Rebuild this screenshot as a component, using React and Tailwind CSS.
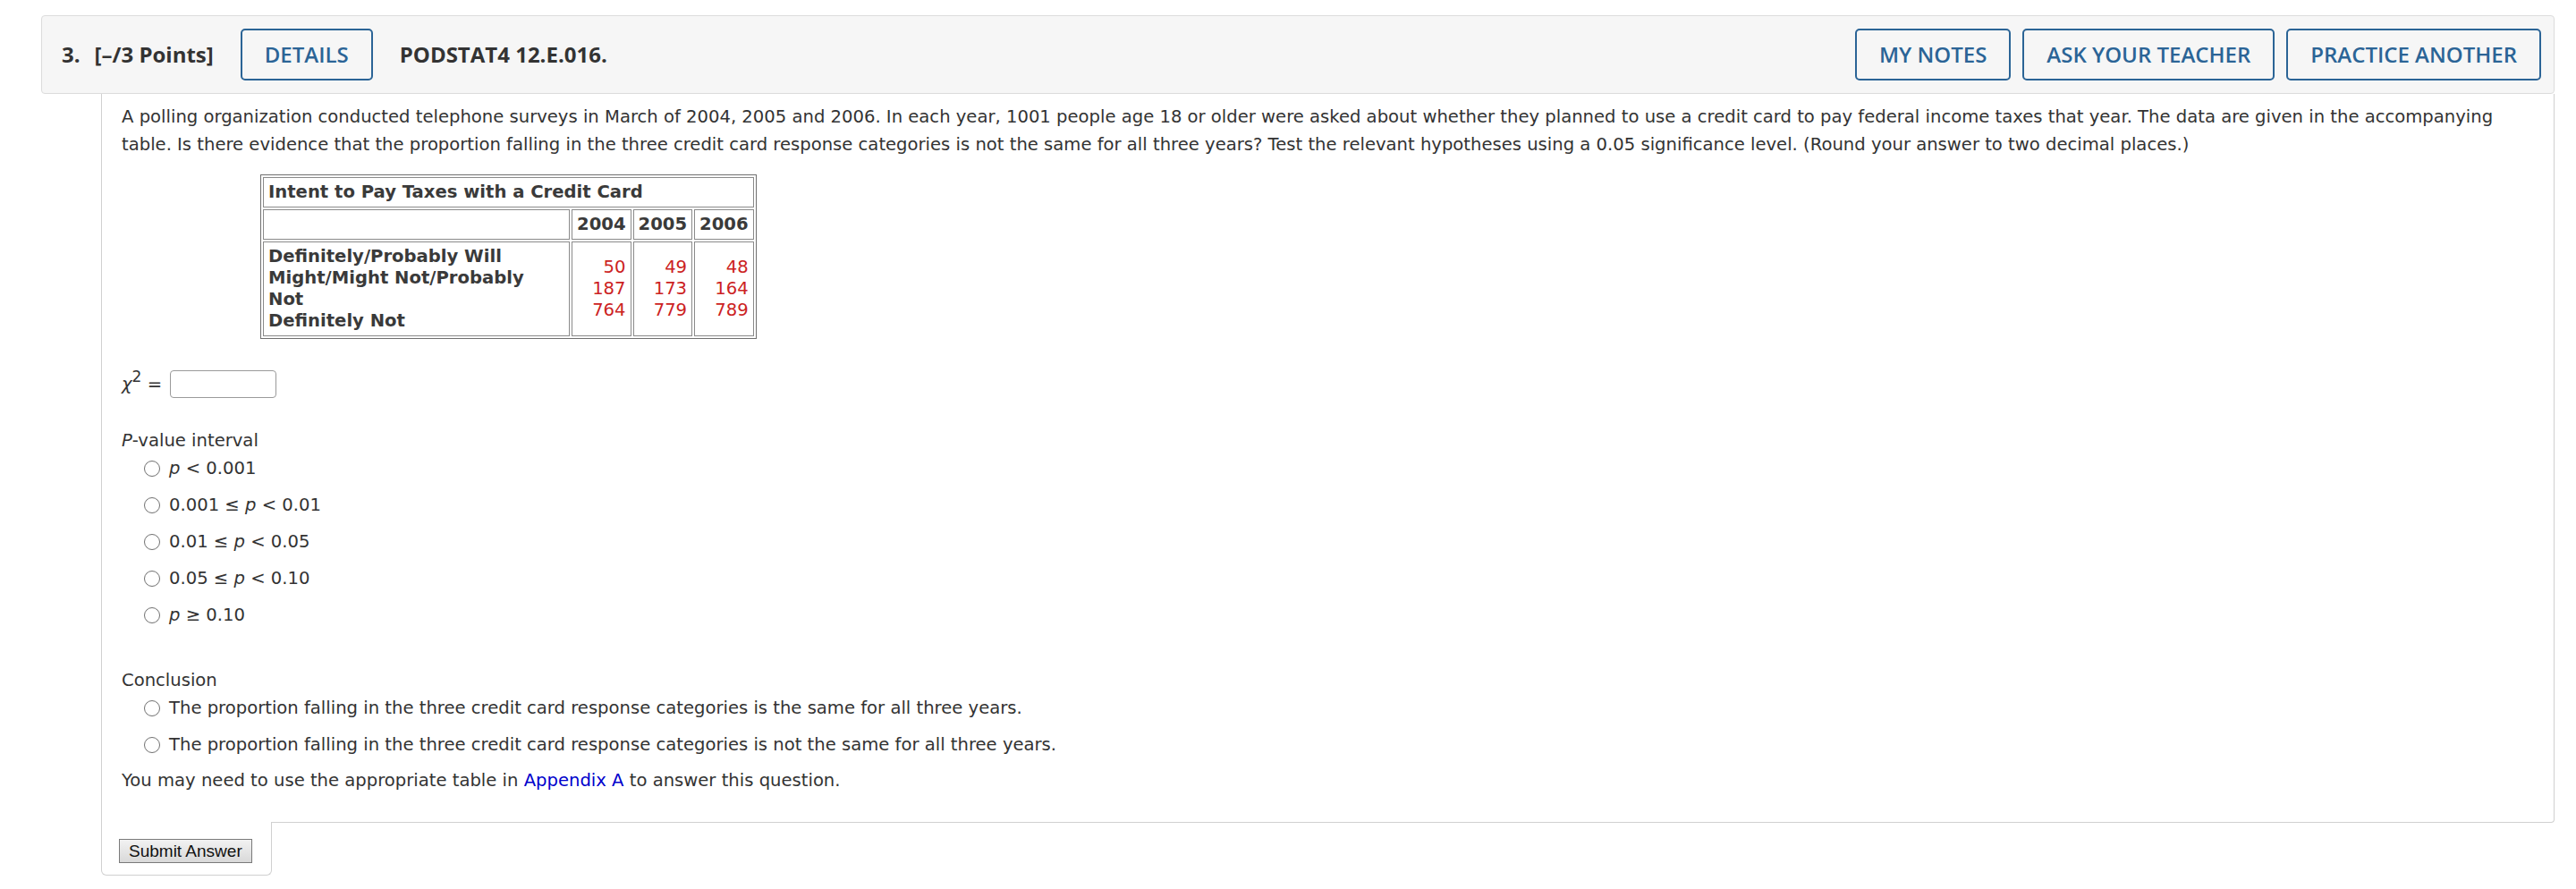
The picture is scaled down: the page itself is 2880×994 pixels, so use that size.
import React from "react";

const Radio = () => (
  <span className="inline-block w-[18px] h-[18px] rounded-full border-[1.5px] border-[#707070] bg-white shrink-0" />
);

const Option = ({ children, first }) => (
  <div className={`flex items-center pl-[25px] h-[31px] gap-[10px] ${first ? "" : "mt-[10px]"}`}>
    <Radio />
    <span>{children}</span>
  </div>
);

const HeadBtn = ({ children }) => (
  <button className="h-[58px] px-[25px] rounded-[5px] border-2 border-[#2b6496] text-[#2b6496] text-[24px] font-semibold leading-none whitespace-nowrap">
    {children}
  </button>
);

const cell = "border border-[#8a8a8a] px-[5px] py-[4px] leading-[24px]";

export default function App() {
  return (
    <div className="bg-white min-h-[994px] pl-[46px] pr-[24px] pt-[17px] text-[#333]">
      {/* header */}
      <div className="h-[88px] flex items-center justify-between bg-[#f6f6f6] border border-[#dcdcdc] rounded-[4px] pl-[22px] pr-[14px] font-['Open_Sans',sans-serif] text-[24px] font-bold text-[#333]">
        <div className="flex items-center">
          <span className="mr-[16px]">3.</span>
          <span className="mr-[30px]">[–/3 Points]</span>
          <HeadBtn>DETAILS</HeadBtn>
          <span className="ml-[30px]">PODSTAT4 12.E.016.</span>
        </div>
        <div className="flex items-center gap-[13px]">
          <HeadBtn>MY NOTES</HeadBtn>
          <HeadBtn>ASK YOUR TEACHER</HeadBtn>
          <HeadBtn>PRACTICE ANOTHER</HeadBtn>
        </div>
      </div>

      {/* body */}
      <div className="ml-[67px] border-l border-r border-b border-[#d0d0d0] rounded-br-[4px] pl-[22px] pr-[22px] pt-[10px] pb-[31px] font-['DejaVu_Sans',sans-serif] text-[19.6px] leading-[31px] text-[#333]">
        <p>
          A polling organization conducted telephone surveys in March of 2004, 2005 and 2006. In each year, 1001 people age 18 or older were asked about whether they planned to use a credit card to pay federal income taxes that year. The data are given in the accompanying
          <br />
          table. Is there evidence that the proportion falling in the three credit card response categories is not the same for all three years? Test the relevant hypotheses using a 0.05 significance level. (Round your answer to two decimal places.)
        </p>

        <div className="mt-[18px] ml-[155px]">
          <table className="border-separate border-spacing-[2px] border border-[#707070] text-[19.6px] text-[#3a3a3a]">
            <tbody>
              <tr>
                <td colSpan={4} className={`${cell} font-bold text-left`}>
                  Intent to Pay Taxes with a Credit Card
                </td>
              </tr>
              <tr>
                <td className={`${cell} w-[343px]`}></td>
                <td className={`${cell} w-[66px] font-bold text-right`}>2004</td>
                <td className={`${cell} w-[66px] font-bold text-right`}>2005</td>
                <td className={`${cell} w-[66px] font-bold text-right`}>2006</td>
              </tr>
              <tr>
                <td className={`${cell} font-bold align-middle whitespace-nowrap`}>
                  <div>Definitely/Probably Will</div>
                  <div>Might/Might Not/Probably</div>
                  <div>Not</div>
                  <div>Definitely Not</div>
                </td>
                <td className={`${cell} text-right align-middle text-[#cc2222]`}>
                  <div>50</div>
                  <div>187</div>
                  <div>764</div>
                </td>
                <td className={`${cell} text-right align-middle text-[#cc2222]`}>
                  <div>49</div>
                  <div>173</div>
                  <div>779</div>
                </td>
                <td className={`${cell} text-right align-middle text-[#cc2222]`}>
                  <div>48</div>
                  <div>164</div>
                  <div>789</div>
                </td>
              </tr>
            </tbody>
          </table>
        </div>

        <div className="mt-[35px] flex items-center h-[31px]">
          <span className="whitespace-pre">
            <i>χ</i>
            <sup className="text-[17px] top-[-0.55em]">2</sup> ={" "}
          </span>
          <span className="inline-block w-[119px] h-[31px] border border-[#9a9a9a] rounded-[4px] bg-white ml-[3px]" />
        </div>

        <div className="mt-[32px]">
          <i>P</i>-value interval
        </div>
        <Option first>
          <i>p</i> &lt; 0.001
        </Option>
        <Option>
          0.001 ≤ <i>p</i> &lt; 0.01
        </Option>
        <Option>
          0.01 ≤ <i>p</i> &lt; 0.05
        </Option>
        <Option>
          0.05 ≤ <i>p</i> &lt; 0.10
        </Option>
        <Option>
          <i>p</i> ≥ 0.10
        </Option>

        <div className="mt-[42px]">Conclusion</div>
        <Option first>The proportion falling in the three credit card response categories is the same for all three years.</Option>
        <Option>The proportion falling in the three credit card response categories is not the same for all three years.</Option>

        <p className="mt-[9px]">
          You may need to use the appropriate table in <span className="text-[#0000cc]">Appendix A</span> to answer this question.
        </p>
      </div>

      {/* submit tab */}
      <div className="relative ml-[67px] -mt-px w-[191px] bg-white border-l border-r border-b border-[#d0d0d0] rounded-b-[6px] pl-[19px] pt-[19px] pb-[13px]">
        <button className="h-[27px] px-[10px] border border-[#7a7a7a] bg-gradient-to-b from-[#f2f2f2] to-[#d9d9d9] text-[#111] font-['Liberation_Sans',Arial,sans-serif] text-[19px] leading-none whitespace-nowrap">
          Submit Answer
        </button>
      </div>
    </div>
  );
}
